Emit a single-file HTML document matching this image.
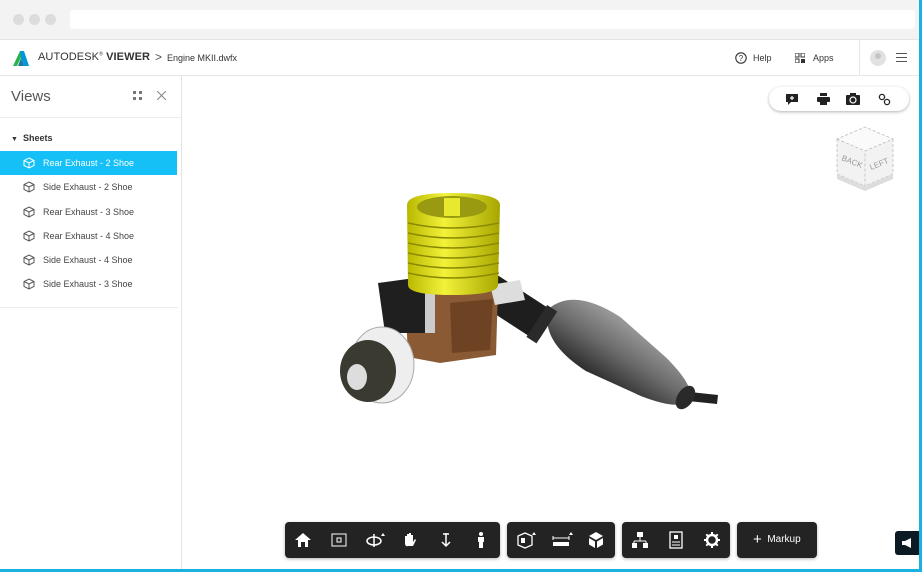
<!DOCTYPE html>
<html><head><meta charset="utf-8"><style>
*{margin:0;padding:0;box-sizing:border-box}
body{width:922px;height:572px;overflow:hidden;background:#fff;font-family:"Liberation Sans",sans-serif;position:relative;color:#333}
.abs{position:absolute}
.dot{position:absolute;top:14px;width:11px;height:11px;border-radius:50%;background:#dcdcdc}
.item{position:absolute;left:0;width:177px;height:24px;font-size:9px;color:#444;line-height:24px;padding-left:43px}
.item svg{position:absolute;left:23px;top:6px}
.grp{position:absolute;top:522px;height:36px;background:#232323;border-radius:4px;box-shadow:0 1px 3px rgba(0,0,0,.3)}
.grp svg{position:absolute;top:9px}
</style></head><body>
<div class="abs" style="left:0;top:0;width:922px;height:40px;background:#f3f3f3;border-bottom:1px solid #e4e4e4"></div>
<div class="dot" style="left:13px"></div><div class="dot" style="left:29px"></div><div class="dot" style="left:45px"></div>
<div class="abs" style="left:70px;top:10px;width:845px;height:19px;background:#fff;border-radius:3px"></div>
<div class="abs" style="left:0;top:40px;width:922px;height:36px;background:#fff;border-bottom:1px solid #e6e6e6"></div>
<svg class="abs" style="left:12px;top:50px" width="18" height="16" viewBox="0 0 18 16"><path d="M1 16 L8 1 L12 1 L5 16Z" fill="#2bb24c"/><path d="M8 1 L12 1 L17 16 L12 16 L9 8Z" fill="#0696d7"/><path d="M9 8 L12 16 L6 16Z" fill="#1b7a9a"/></svg>
<div class="abs" style="left:38px;top:51px;font-size:11px;color:#333;letter-spacing:.1px;white-space:nowrap">AUTODESK<sup style="font-size:5px">®</sup> <b>VIEWER</b></div>
<div class="abs" style="left:155px;top:50px;font-size:12px;color:#555">&gt;</div>
<div class="abs" style="left:167px;top:53px;font-size:9px;color:#333">Engine MKII.dwfx</div>
<svg class="abs" style="left:735px;top:52px" width="12" height="12"><circle cx="6" cy="6" r="5.2" fill="none" stroke="#333" stroke-width="1.1"/><text x="6" y="9" font-size="8" text-anchor="middle" fill="#333" font-family="Liberation Sans">?</text></svg>
<div class="abs" style="left:753px;top:53px;font-size:9px;color:#333">Help</div>
<svg class="abs" style="left:795px;top:53px" width="10" height="10"><rect x="0" y="0" width="4" height="4" fill="none" stroke="#333"/><rect x="6" y="0" width="4" height="4" fill="none" stroke="#333"/><rect x="0" y="6" width="4" height="4" fill="none" stroke="#333"/><rect x="6" y="6" width="4" height="4" fill="#333"/></svg>
<div class="abs" style="left:813px;top:53px;font-size:9px;color:#333">Apps</div>
<div class="abs" style="left:859px;top:40px;width:1px;height:36px;background:#e6e6e6"></div>
<div class="abs" style="left:870px;top:50px;width:16px;height:16px;border-radius:50%;background:#e2e2e2"></div>
<div class="abs" style="left:875px;top:53px;width:6px;height:6px;border-radius:50%;background:#c5c5c5"></div>
<div class="abs" style="left:896px;top:53px;width:11px;height:9px;border-top:1.3px solid #555;border-bottom:1.3px solid #555"></div>
<div class="abs" style="left:896px;top:57px;width:11px;height:1.3px;background:#555"></div>
<div class="abs" style="left:181px;top:76px;width:1px;height:496px;background:#e3e3e3"></div>
<div class="abs" style="left:11px;top:88px;font-size:15px;color:#555">Views</div>
<svg class="abs" style="left:133px;top:91px" width="9" height="9"><rect x="0" y="0" width="3" height="3" fill="#777"/><rect x="6" y="0" width="3" height="3" fill="#777"/><rect x="0" y="6" width="3" height="3" fill="#777"/><rect x="6" y="6" width="3" height="3" fill="#777"/></svg>
<svg class="abs" style="left:157px;top:91px" width="9" height="9"><path d="M0 0L9 9M9 0L0 9" stroke="#888" stroke-width="1.1"/></svg>
<div class="abs" style="left:0;top:117px;width:181px;height:1px;background:#ececec"></div>
<div class="abs" style="left:11px;top:133px;font-size:9px;color:#333"><span style="font-size:7px">▼</span>&nbsp; <b>Sheets</b></div>
<div class="item" style="top:151px;background:#14c0f5;color:#fff"><svg width="12" height="12" viewBox="0 0 12 12"><path d="M6 1L11 3.5V8.5L6 11L1 8.5V3.5Z M1 3.5L6 6L11 3.5M6 6V11" fill="none" stroke="#fff" stroke-width="1"/></svg>Rear Exhaust - 2 Shoe</div>
<div class="item" style="top:175px"><svg width="12" height="12" viewBox="0 0 12 12"><path d="M6 1L11 3.5V8.5L6 11L1 8.5V3.5Z M1 3.5L6 6L11 3.5M6 6V11" fill="none" stroke="#555" stroke-width="1"/></svg>Side Exhaust - 2 Shoe</div>
<div class="item" style="top:200px"><svg width="12" height="12" viewBox="0 0 12 12"><path d="M6 1L11 3.5V8.5L6 11L1 8.5V3.5Z M1 3.5L6 6L11 3.5M6 6V11" fill="none" stroke="#555" stroke-width="1"/></svg>Rear Exhaust - 3 Shoe</div>
<div class="item" style="top:224px"><svg width="12" height="12" viewBox="0 0 12 12"><path d="M6 1L11 3.5V8.5L6 11L1 8.5V3.5Z M1 3.5L6 6L11 3.5M6 6V11" fill="none" stroke="#555" stroke-width="1"/></svg>Rear Exhaust - 4 Shoe</div>
<div class="item" style="top:248px"><svg width="12" height="12" viewBox="0 0 12 12"><path d="M6 1L11 3.5V8.5L6 11L1 8.5V3.5Z M1 3.5L6 6L11 3.5M6 6V11" fill="none" stroke="#555" stroke-width="1"/></svg>Side Exhaust - 4 Shoe</div>
<div class="item" style="top:272px"><svg width="12" height="12" viewBox="0 0 12 12"><path d="M6 1L11 3.5V8.5L6 11L1 8.5V3.5Z M1 3.5L6 6L11 3.5M6 6V11" fill="none" stroke="#555" stroke-width="1"/></svg>Side Exhaust - 3 Shoe</div>
<div class="abs" style="left:0;top:307px;width:178px;height:1px;background:#ececec"></div>
<div class="abs" style="left:769px;top:87px;width:140px;height:24px;border-radius:12px;background:#fff;box-shadow:0 1px 3px rgba(0,0,0,.3)"></div>
<svg class="abs" style="left:785px;top:93px" width="14" height="12"><path d="M1 1H13V9H6L3 12V9H1Z" fill="#222"/><path d="M7 3V7M5 5H9" stroke="#fff" stroke-width="1.2"/></svg>
<svg class="abs" style="left:817px;top:93px" width="13" height="12"><rect x="3" y="0" width="7" height="3" fill="#222"/><rect x="0" y="4" width="13" height="5" rx="1" fill="#222"/><rect x="3" y="8" width="7" height="4" fill="#222"/></svg>
<svg class="abs" style="left:846px;top:93px" width="14" height="12"><rect x="0" y="2" width="14" height="10" rx="1" fill="#222"/><rect x="4" y="0" width="6" height="3" fill="#222"/><circle cx="7" cy="7" r="3" fill="none" stroke="#fff" stroke-width="1.2"/></svg>
<svg class="abs" style="left:878px;top:93px" width="13" height="13"><circle cx="4" cy="4" r="2.6" fill="none" stroke="#222" stroke-width="1.3"/><circle cx="9" cy="9" r="2.6" fill="none" stroke="#222" stroke-width="1.3"/></svg>
<svg class="abs" style="left:833px;top:124px" width="64" height="70" viewBox="0 0 64 70">
<path d="M32 3L60 15V50L32 62L4 50V15Z" fill="#f2f2f2"/>
<path d="M4 15L32 27L60 15L32 3Z" fill="#fafafa" stroke="#bbb" stroke-dasharray="3 2" stroke-width=".8"/>
<path d="M4 15V50L32 62V27M60 15V50L32 62" fill="none" stroke="#bbb" stroke-dasharray="3 2" stroke-width=".8"/>
<path d="M4 50L32 62L60 50V55L32 67L4 55Z" fill="#ddd"/>
<text x="8" y="36" font-size="8" fill="#999" font-family="Liberation Sans" transform="rotate(22 8 36)">BACK</text>
<text x="38" y="46" font-size="8" fill="#999" font-family="Liberation Sans" transform="rotate(-22 38 46)">LEFT</text>
</svg>
<svg class="abs" style="left:330px;top:185px" width="400" height="240" viewBox="0 0 400 240">
<defs>
<linearGradient id="y" x1="0" x2="1"><stop offset="0" stop-color="#b8b800"/><stop offset=".4" stop-color="#f2f23a"/><stop offset="1" stop-color="#a6a600"/></linearGradient>
<linearGradient id="m" x1="0" y1="0" x2="0" y2="1"><stop offset="0" stop-color="#9a9a9a"/><stop offset=".5" stop-color="#6a6a6a"/><stop offset="1" stop-color="#2e2e2e"/></linearGradient>
</defs>
<path d="M360 207 L388 210 L387 219 L358 216Z" fill="#222"/>
<g transform="rotate(33 290 170)">
<path d="M205 170 Q215 138 270 138 L330 147 Q372 156 372 170 Q372 184 330 193 L270 202 Q215 202 205 170Z" fill="url(#m)"/>
<ellipse cx="368" cy="170" rx="8" ry="13" fill="#2a2a2a"/>
</g>
<g transform="rotate(33 190 125)"><rect x="150" y="108" width="72" height="34" rx="4" fill="#1e1e1e"/><rect x="210" y="106" width="12" height="38" fill="#2a2a2a"/></g>
<path d="M75 105 L168 103 L166 170 L110 178 L78 172Z" fill="#8a5a35"/>
<path d="M120 118 L163 114 L160 165 L122 168Z" fill="#6e4324"/>
<path d="M48 98 L92 92 L102 148 L55 148Z" fill="#1f1f1f"/>
<path d="M160 100 L190 95 L195 115 L165 120Z" fill="#ddd"/>
<rect x="95" y="100" width="10" height="48" fill="#ccc"/>
<path d="M77 20 Q77 8 122 8 Q170 8 170 20 L168 100 Q168 110 122 110 Q78 110 78 100Z" fill="url(#y)"/>
<g stroke="#8a8a00" stroke-width="1.5" fill="none">
<path d="M78 38 Q122 48 169 38"/><path d="M78 48 Q122 58 169 48"/><path d="M78 58 Q122 68 169 58"/><path d="M78 68 Q122 78 169 68"/><path d="M78 78 Q122 88 169 78"/><path d="M78 88 Q122 98 169 88"/></g>
<ellipse cx="122" cy="22" rx="35" ry="11" fill="#9a9a10"/>
<rect x="114" y="13" width="16" height="18" fill="#e8e830"/>
<ellipse cx="52" cy="180" rx="32" ry="38" fill="#eee" stroke="#aaa"/>
<ellipse cx="38" cy="186" rx="28" ry="31" fill="#3a3a30"/>
<ellipse cx="27" cy="192" rx="10" ry="13" fill="#ddd"/>
</svg>
<div class="grp" style="left:285px;width:215px">
<svg style="left:9px" width="18" height="18" viewBox="0 0 18 18"><path d="M9 2L17 9H14V16H11V11H7V16H4V9H1Z" fill="#fff"/></svg>
<svg style="left:45px" width="18" height="18" viewBox="0 0 18 18"><rect x="2" y="3" width="14" height="12" fill="none" stroke="#fff"/><path d="M7 7h4v4H7z" fill="none" stroke="#fff"/></svg>
<svg style="left:80px" width="22" height="18" viewBox="0 0 22 18"><ellipse cx="9" cy="10" rx="7" ry="4" fill="none" stroke="#fff" stroke-width="1.5"/><path d="M9 3V16" stroke="#fff" stroke-width="1.5"/><path d="M18 2l2 3h-4z" fill="#fff"/></svg>
<svg style="left:116px" width="18" height="18" viewBox="0 0 18 18"><path d="M4 9V5h2v4V3h2v6V2h2v7V4h2v7l2-3 1 1-3 6H7Q4 16 4 12Z" fill="#fff"/></svg>
<svg style="left:152px" width="18" height="18" viewBox="0 0 18 18"><path d="M9 2V15M5 11l4 4 4-4M6 3h6" stroke="#fff" stroke-width="1.5" fill="none"/></svg>
<svg style="left:187px" width="18" height="18" viewBox="0 0 18 18"><circle cx="9" cy="3" r="2" fill="#fff"/><path d="M6 6h6v5h-1v6H7v-6H6z" fill="#fff"/></svg>
</div>
<div class="grp" style="left:507px;width:108px">
<svg style="left:9px" width="22" height="18" viewBox="0 0 22 18"><path d="M2 5l7-3 7 3v9l-7 3-7-3z" fill="none" stroke="#fff" stroke-width="1.3"/><path d="M5 7h4v5H5z" fill="#fff"/><path d="M18 1l2 3h-4z" fill="#fff"/></svg>
<svg style="left:44px" width="24" height="18" viewBox="0 0 24 18"><path d="M2 7h16M2 5v4M18 5v4" stroke="#fff"/><rect x="2" y="11" width="16" height="4" fill="#fff"/><path d="M20 1l2 3h-4z" fill="#fff"/></svg>
<svg style="left:80px" width="18" height="18" viewBox="0 0 18 18"><path d="M9 1l7 4-7 4-7-4z M2 7l6 3.5V17L2 13.5z M16 7l-6 3.5V17l6-3.5z" fill="#fff"/></svg>
</div>
<div class="grp" style="left:622px;width:108px">
<svg style="left:9px" width="18" height="18" viewBox="0 0 18 18"><rect x="6" y="1" width="6" height="5" fill="#fff"/><path d="M9 6v4M3 10h12M3 10v3M15 10v3" stroke="#fff"/><rect x="1" y="12" width="5" height="5" fill="#fff"/><rect x="12" y="12" width="5" height="5" fill="#fff"/></svg>
<svg style="left:45px" width="18" height="18" viewBox="0 0 18 18"><rect x="3" y="1" width="12" height="16" fill="none" stroke="#fff" stroke-width="1.3"/><rect x="7" y="4" width="4" height="4" fill="#fff"/><path d="M5 11h8M5 14h8" stroke="#fff"/></svg>
<svg style="left:81px" width="18" height="18" viewBox="0 0 18 18"><circle cx="9" cy="9" r="5" fill="none" stroke="#fff" stroke-width="2.5"/><path d="M9 1v3M9 14v3M1 9h3M14 9h3M3.3 3.3l2 2M12.7 12.7l2 2M3.3 14.7l2-2M12.7 5.3l2-2" stroke="#fff" stroke-width="2"/></svg>
</div>
<div class="grp" style="left:737px;width:80px;color:#fff;font-size:10px;line-height:36px;padding-left:16px"><span style="font-size:15px;vertical-align:-2px">+</span>&nbsp; Markup</div>
<div class="abs" style="left:895px;top:531px;width:27px;height:24px;background:#0c1a24;border-radius:3px"></div>
<svg class="abs" style="left:901px;top:537px" width="12" height="12"><path d="M1 4h3l6-3v10L4 8H1z" fill="#fff"/></svg>
<div class="abs" style="left:919px;top:0;width:3px;height:572px;background:#1ab0e0"></div>
<div class="abs" style="left:0;top:569px;width:922px;height:3px;background:#1ab0e0"></div>
</body></html>
